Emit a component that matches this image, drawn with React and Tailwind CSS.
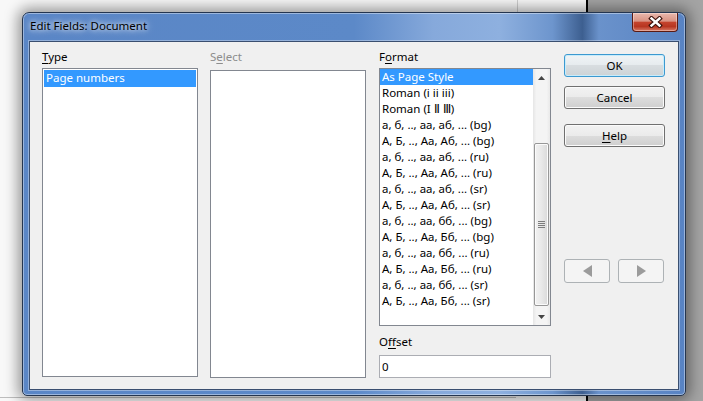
import React from 'react';

const formats = [
  'As Page Style',
  'Roman (i ii iii)',
  'Roman (I Ⅱ Ⅲ)',
  'а, б, .., аа, аб, ... (bg)',
  'А, Б, .., Аа, Аб, ... (bg)',
  'а, б, .., аа, аб, ... (ru)',
  'А, Б, .., Аа, Аб, ... (ru)',
  'а, б, .., аа, аб, ... (sr)',
  'А, Б, .., Аа, Аб, ... (sr)',
  'а, б, .., аа, бб, ... (bg)',
  'А, Б, .., Аа, Бб, ... (bg)',
  'а, б, .., аа, бб, ... (ru)',
  'А, Б, .., Аа, Бб, ... (ru)',
  'а, б, .., аа, бб, ... (sr)',
  'А, Б, .., Аа, Бб, ... (sr)',
];

function Button({ children, focused }) {
  return (
    <button
      className={
        focused
          ? 'h-[23px] w-full rounded-[3px] border border-[#3c99d0] bg-[linear-gradient(to_bottom,#f0f4f6_0%,#e6ebee_50%,#d8dde0_50%,#cdd3d6_100%)] shadow-[inset_0_0_0_1px_#c8ecfb] text-black leading-[21px]'
          : 'h-[23px] w-full rounded-[3px] border border-[#707070] bg-[linear-gradient(to_bottom,#f2f2f2_0%,#ebebeb_50%,#dddddd_50%,#cfcfcf_100%)] shadow-[inset_0_0_0_1px_#fbfbfb] text-black leading-[21px]'
      }
    >
      {children}
    </button>
  );
}

function Label({ children, className = '' }) {
  return <div className={'leading-[15px] ' + className}>{children}</div>;
}

export default function App() {
  return (
    <div className="relative w-[703px] h-[401px] overflow-hidden bg-[#f8f8f8] font-['Noto_Sans',sans-serif] text-[11.5px] text-black">
      {/* desktop windows behind the dialog */}
      <div className="absolute left-[586px] top-0 bottom-0 right-0 border-l-2 border-black bg-[#a4a4a4]" />
      <div className="absolute left-[517px] top-0 h-[14px] w-px bg-[#cfcfcf]" />
      <div className="absolute left-0 top-[397px] w-[516px] h-px bg-[#bdbdbd]" />

      {/* dialog window */}
      <div className="absolute left-[22px] top-[12px] w-[664px] h-[384px] flex flex-col rounded-t-[7px] rounded-b-[5px] border border-[#24354f] bg-[linear-gradient(to_right,#5a86c6_0%,#5c89c8_50%,#86a9db_62%,#8eb0df_72%,#6d95cd_80%,#3d5f90_84.5%,#6a92cb_87%,#5883c3_100%)] shadow-[inset_0_0_0_1px_rgba(255,255,255,0.4),0_0_14px_4px_rgba(0,0,0,0.4)]">
        {/* title bar */}
        <div className="relative h-[28px] flex items-center pl-[7px] pb-[3px]">
          <span className="text-[11.5px] text-black [text-shadow:0_0_8px_rgba(255,255,255,0.95),0_0_4px_rgba(255,255,255,0.8)]">
            Edit Fields: Document
          </span>
          <div className="absolute right-[7px] top-0 w-[46px] h-[19px] flex items-center justify-center rounded-b-[4px] border border-t-0 border-[#5a1a12] bg-[linear-gradient(to_bottom,#e9b8ad_0%,#d99383_45%,#c4432d_52%,#b73621_75%,#d77a66_100%)] shadow-[inset_0_0_0_1px_rgba(255,255,255,0.35)]">
            <svg width="15" height="12" viewBox="0 0 15 12">
              <path d="M3.5 2.5 L11.5 9.5 M11.5 2.5 L3.5 9.5" stroke="#3b120c" strokeWidth="4.6" strokeLinecap="square" />
              <path d="M3.5 2.5 L11.5 9.5 M11.5 2.5 L3.5 9.5" stroke="#ffffff" strokeWidth="2.4" strokeLinecap="square" />
            </svg>
          </div>
        </div>

        {/* client area */}
        <div className="flex-1 mx-[6px] mb-[5px] border border-[#3a4f70] bg-[#f0f0f0] shadow-[0_0_0_1px_rgba(255,255,255,0.35)] flex pl-[12px] pt-[7px]">
          {/* Type */}
          <div className="w-[156px] flex flex-col">
            <Label className="h-[19px]">
              <span className="underline underline-offset-2">T</span>ype
            </Label>
            <div className="h-[309px] border border-[#828790] bg-white p-px">
              <div className="h-[17px] leading-[16px] pl-[2px] bg-[#3399ff] text-white">Page numbers</div>
            </div>
          </div>

          {/* Select */}
          <div className="ml-[12px] w-[156px] flex flex-col">
            <Label className="h-[21px] text-[#8d8d8d]">
              S<span className="underline underline-offset-2">e</span>lect
            </Label>
            <div className="h-[308px] border border-[#828790] bg-white" />
          </div>

          {/* Format */}
          <div className="ml-[13px] w-[172px] flex flex-col">
            <Label className="h-[19px]">
              F<span className="underline underline-offset-2">o</span>rmat
            </Label>
            <div className="h-[258px] border border-[#828790] bg-white flex">
              <div className="flex-1 flex flex-col">
                {formats.map((f, i) => (
                  <div
                    key={i}
                    className={
                      i === 0
                        ? 'h-[16px] leading-[16px] pl-[2px] whitespace-nowrap bg-[#3399ff] text-white'
                        : 'h-[16px] leading-[16px] pl-[2px] whitespace-nowrap'
                    }
                  >
                    {f}
                  </div>
                ))}
              </div>
              {/* scrollbar */}
              <div className="w-[17px] flex flex-col bg-[linear-gradient(to_right,#e6e6e6_0%,#f4f4f4_20%,#f4f4f4_80%,#e9e9e9_100%)]">
                <div className="h-[17px] flex items-center justify-center">
                  <svg width="7" height="4" viewBox="0 0 7 4">
                    <path d="M0 4 L3.5 0 L7 4 Z" fill="#444" />
                  </svg>
                </div>
                <div className="flex-1 flex flex-col px-px">
                  <div className="h-[57px]" />
                  <div className="h-[163px] rounded-[2px] border border-[#979797] bg-[linear-gradient(to_right,#f2f2f2_0%,#e8e8e8_50%,#d9d9d9_100%)] shadow-[inset_0_0_0_1px_#fbfbfb] flex flex-col items-center justify-center gap-[1px]">
                    <div className="w-[7px] h-px bg-[#7d7d7d]" />
                    <div className="w-[7px] h-px bg-[#7d7d7d]" />
                    <div className="w-[7px] h-px bg-[#7d7d7d]" />
                    <div className="w-[7px] h-px bg-[#7d7d7d]" />
                  </div>
                </div>
                <div className="h-[17px] flex items-center justify-center">
                  <svg width="7" height="4" viewBox="0 0 7 4">
                    <path d="M0 0 L7 0 L3.5 4 Z" fill="#444" />
                  </svg>
                </div>
              </div>
            </div>
            <Label className="mt-[8px] mb-[6px]">
              O<span className="underline underline-offset-2">f</span>fset
            </Label>
            <div className="h-[23px] border border-[#abadb3] bg-white pl-[2px] leading-[21px]">0</div>
          </div>

          {/* Buttons */}
          <div className="ml-[13px] w-[101px] flex flex-col pt-[5px]">
            <Button focused>OK</Button>
            <div className="mt-[9px]">
              <Button>Cancel</Button>
            </div>
            <div className="mt-[15px]">
              <Button>
                <span className="underline underline-offset-2">H</span>elp
              </Button>
            </div>
            <div className="mt-[112px] flex gap-[8px] w-[100px]">
              <div className="w-[46px] h-[24px] rounded-[3px] border border-[#adb2b5] bg-[#f4f4f4] flex items-center justify-center">
                <svg width="9" height="12" viewBox="0 0 9 12">
                  <path d="M9 0 L0 6 L9 12 Z" fill="#9b9b9b" />
                </svg>
              </div>
              <div className="w-[46px] h-[24px] rounded-[3px] border border-[#adb2b5] bg-[#f4f4f4] flex items-center justify-center">
                <svg width="9" height="12" viewBox="0 0 9 12">
                  <path d="M0 0 L9 6 L0 12 Z" fill="#9b9b9b" />
                </svg>
              </div>
            </div>
          </div>
        </div>
      </div>
    </div>
  );
}
